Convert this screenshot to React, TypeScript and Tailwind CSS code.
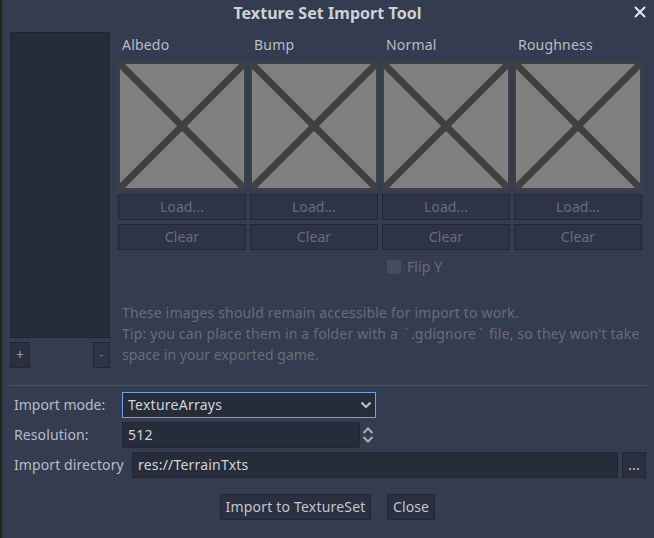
import React from 'react';

const FONT = "font-['Noto_Sans',sans-serif]";

const TEXTURES = ['Albedo', 'Bump', 'Normal', 'Roughness'];

const Placeholder = () => (
  <svg width="128" height="128" viewBox="0 0 128 128" className="block">
    <rect width="128" height="128" fill="#808080" />
    <path d="M0 0L128 128M128 0L0 128" stroke="#404040" strokeWidth="7" />
    <rect x="1" y="1" width="126" height="126" fill="none" stroke="#404040" strokeWidth="2" />
  </svg>
);

const DisabledButton = ({ label }: { label: string }) => (
  <div className="flex h-[26px] w-[128px] items-center justify-center border border-[#222738] bg-[#2e3446] pb-[2px] text-[#686c77]">
    {label}
  </div>
);

const TextureColumn = ({ name }: { name: string }) => (
  <div className="flex w-[128px] flex-col">
    <div className="h-[30px] pl-1 pt-[2px] leading-[22px] tracking-[0.2px] text-[#b8bcc5]">{name}</div>
    <Placeholder />
    <div className="mt-1 flex flex-col gap-1">
      <DisabledButton label="Load..." />
      <DisabledButton label="Clear" />
    </div>
  </div>
);

const Field = ({ className, children }: { className: string; children: React.ReactNode }) => (
  <div className={`flex h-[26px] items-center border border-[#20253a] bg-[#272c3b] pl-[5px] tracking-[0.2px] text-[#d2d4d9] ${className}`}>
    {children}
  </div>
);

export default function App() {
  return (
    <div className={`flex h-[538px] w-[654px] overflow-hidden bg-[#1c2a1c] text-[14px] tracking-[0.1px] ${FONT}`}>
      <div className="w-[2px] shrink-0" />
      <div className="flex h-full w-[652px] flex-col bg-[#343c4f]">
        {/* title */}
        <div className="relative flex h-[32px] shrink-0 items-start justify-center pr-[1px] pt-[1px] text-[16px] font-bold leading-[24px] tracking-[0.05px] text-[#ced1d7]">
          Texture Set Import Tool
          <svg width="12" height="12" viewBox="0 0 12 12" className="absolute left-[632px] top-[6px]">
            <path d="M1 1L11 11M11 1L1 11" stroke="#e6e7ea" strokeWidth="2" />
          </svg>
        </div>

        <div className="flex h-[336px] shrink-0 pl-[8px]">
          {/* texture set list */}
          <div className="flex w-[100px] flex-col">
            <div className="h-[306px] border border-[#1f2432] bg-[#272c3b]" />
            <div className="mt-1 flex justify-between">
              <div className="flex h-[26px] w-[20px] items-center justify-center border border-[#222738] bg-[#2a3040] pb-[2px] font-light text-[#d2d4d9]">+</div>
              <div className="flex h-[26px] w-[17px] items-center justify-center border border-[#222738] bg-[#2e3446] pb-[2px] text-[#686c77]">-</div>
            </div>
          </div>

          <div className="ml-2 flex w-[524px] flex-col">
            <div className="flex gap-1">
              {TEXTURES.map((name) => (
                <TextureColumn key={name} name={name} />
              ))}
            </div>
            <div className="ml-[269px] mt-[6px] flex h-[22px] items-center gap-[6px] pb-[2px] text-[#686c77]">
              <div className="mt-[2px] h-[14px] w-[14px] rounded-[2px] bg-[#454b5c]" />
              Flip Y
            </div>
            <div className="mt-[24px] w-[524px] whitespace-nowrap pl-1 leading-[21px] text-[#686c77]">
              <div className="tracking-[0.17px]">These images should remain accessible for import to work.</div>
              <div className="tracking-[0.17px]">
                Tip: you can place them in a folder with a <span className="mx-[2.5px]">`</span>.gdignore<span className="mx-[2.5px]">`</span> file, so they won't take
              </div>
              <div className="tracking-[0.05px]">space in your exported game.</div>
            </div>
          </div>
        </div>

        <div className="mx-[7px] mt-[17px] h-[1px] shrink-0 bg-[#4a5060]" />

        {/* import options */}
        <div className="mt-[6px] flex flex-col gap-1 pl-[12px] leading-[26px] text-[#b8bcc5]">
          <div className="flex h-[26px]">
            <div className="w-[108px] tracking-[0px]">Import mode:</div>
            <div className="flex h-[26px] w-[254px] items-center justify-between border border-[#6ea1e6] bg-[#272c3b] pl-[5px] pr-[3px] tracking-[0.25px] text-[#d2d4d9]">
              TextureArrays
              <svg width="12" height="8" viewBox="0 0 12 8">
                <path d="M1.5 1.5L6 6L10.5 1.5" fill="none" stroke="#bfc2c9" strokeWidth="2" />
              </svg>
            </div>
          </div>
          <div className="flex h-[26px]">
            <div className="w-[108px]">Resolution:</div>
            <Field className="w-[238px]">512</Field>
            <svg width="12" height="16" viewBox="0 0 12 16" className="ml-[2px] mt-[5px]">
              <path d="M1.5 6L6 1.5L10.5 6M1.5 10L6 14.5L10.5 10" fill="none" stroke="#a9adb6" strokeWidth="2" />
            </svg>
          </div>
          <div className="flex h-[26px]">
            <div className="w-[118px]">Import directory</div>
            <Field className="w-[486px]">res://TerrainTxts</Field>
            <div className="ml-1 flex h-[26px] w-[24px] items-center justify-center border border-[#222738] bg-[#2a3040] text-[#c4c7ce]">...</div>
          </div>
        </div>

        {/* footer */}
        <div className="mt-[16px] flex pl-[218px]">
          <div className="flex h-[26px] w-[151px] items-center justify-center border border-[#222738] bg-[#2a3040] pb-[2px] tracking-[0.2px] text-[#c4c7ce]">
            Import to TextureSet
          </div>
          <div className="ml-[16px] flex h-[26px] w-[48px] items-center justify-center border border-[#222738] bg-[#2a3040] pb-[2px] text-[#c4c7ce]">
            Close
          </div>
        </div>
      </div>
    </div>
  );
}
